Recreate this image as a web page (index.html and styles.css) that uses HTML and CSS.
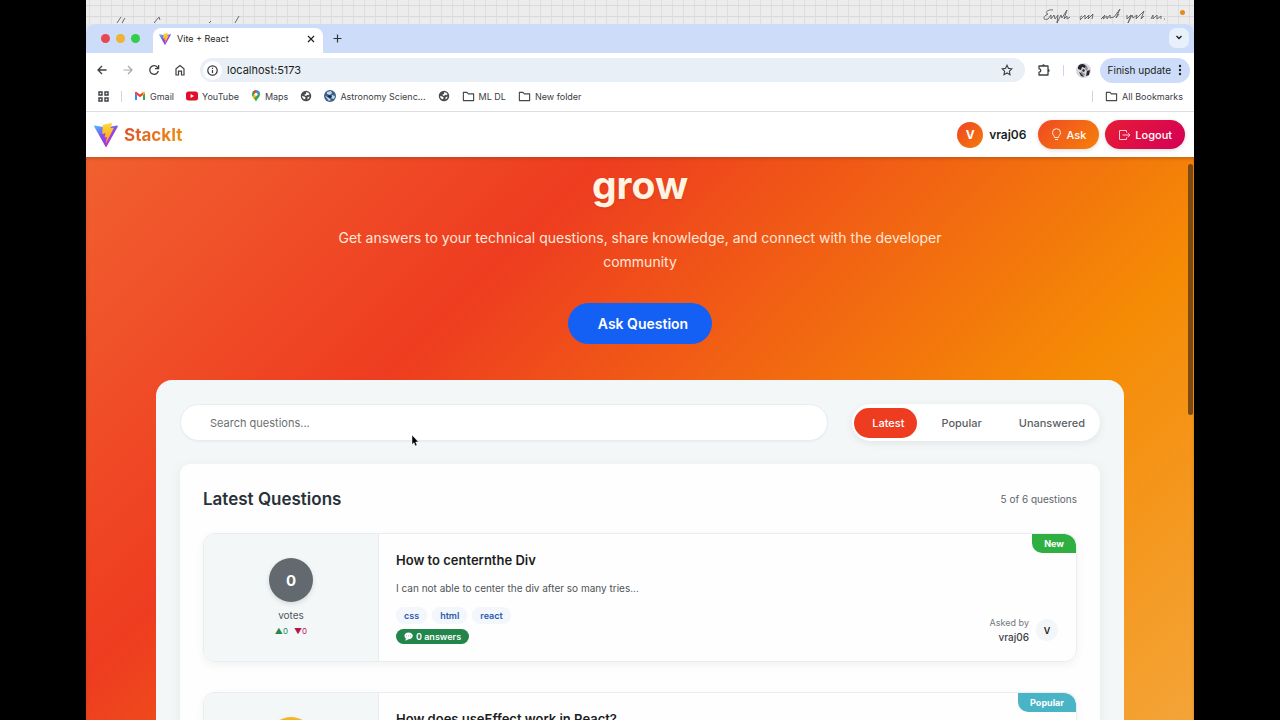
FILE: index.html
```html
<!DOCTYPE html>
<html lang="en">
<head>
  <meta charset="UTF-8" />
  <meta name="viewport" content="width=device-width, initial-scale=1.0"/>
  <title>Vite + React</title>
  <link rel="stylesheet" href="styles.css">
</head>
<body>
  <!-- shared shapes -->
  <svg class="sprite" width="0" height="0" aria-hidden="true">
    <defs>
      <linearGradient id="viteBody" x1="0" y1="0" x2="0.6" y2="1">
        <stop offset="0" stop-color="#41c4ff"/>
        <stop offset="0.5" stop-color="#8a4be8"/>
        <stop offset="1" stop-color="#b030d8"/>
      </linearGradient>
      <linearGradient id="viteBolt" x1="0" y1="0" x2="0" y2="1">
        <stop offset="0" stop-color="#ffd83d"/>
        <stop offset="1" stop-color="#ffa010"/>
      </linearGradient>
    </defs>
    <symbol id="vite" viewBox="0 0 256 257">
      <path fill="url(#viteBody)" d="M255 38 134 254c-2 4-9 4-11 0L1 38c-3-5 1-11 7-10l120 21 119-21c6-1 10 5 8 10z"/>
      <path fill="url(#viteBolt)" d="M185 1 97 18c-2 0-3 2-3 3l-6 92c0 2 2 4 5 4l24-6c3-1 5 2 4 4l-7 36c0 2 2 4 4 4l15-5c3-1 5 2 4 4l-11 56c-1 3 4 5 6 2l78-156c1-2-1-5-4-4l-25 5c-3 0-5-2-4-4l16-47c1-3-1-5-4-5z"/>
    </symbol>
    <symbol id="globe" viewBox="0 0 16 16">
      <circle cx="8" cy="8" r="7" fill="#4a4c50"/>
      <path fill="#fff" d="M8 3c2.200-.2 4 1 4.800 2.800L11 7 9.400 6.200 8.800 7.600H6.600L6 6l2-.8zM2.800 8l3 .8 1.600 1.200-.6 2.400C4.400 12.200 2.800 10.400 2.800 8zM10 9.600l2.800-.8c-.2 1.800-1.400 3.200-2.800 3.800z"/>
    </symbol>
    <symbol id="folder" viewBox="0 0 16 16">
      <path fill="none" stroke="#45474b" stroke-width="1.400" stroke-linejoin="round" d="M1.700 3h4.500l1.600 1.700h6.500v8.300H1.700z"/>
    </symbol>
  </svg>

  <div class="desktop">
    <div class="wallpaper">
      <svg class="scribble scribble-left" width="130" height="8" viewBox="0 0 130 8" aria-hidden="true">
        <path d="M3 8l4-6M8 8l3-5M40 8l5-6 1 3M95 8l2-2M121 8l4-7"/>
      </svg>
      <svg class="scribble" width="124" height="14" viewBox="0 0 124 14" aria-hidden="true">
        <path d="M10 1C5 0 1 4 5 5c-5 2-6 7 0 5l3-4v4l3-4 1 4 3-4-1 8 4-8 1 3 5-8-3 9 3-3v3l3-2M39 7c-4 1 0 3-2 4l5-5v4l4-4-1 4 5-5-1 5M58 10l4-4-2 4 4-3v3l3-4v3l4-1 6-8-4 9 3-4M84 6v4l4-4-3 8 4-8 1 3 4-3-1 4 4-4 4-4-3 8 3-3M108 10l2-4v4l4-4v4l4-3v3M121 10h1"/>
      </svg>
      <span class="rec-dot"></span>
    </div>

    <div class="browser">
      <div class="tab-strip">
        <div class="lights"><span class="light red"></span><span class="light yellow"></span><span class="light green"></span></div>
        <div class="tab">
          <svg width="12" height="12" aria-hidden="true"><use href="#vite"/></svg>
          <span class="tab-title">Vite + React</span>
          <button class="icon-btn" aria-label="Close tab">
            <svg width="8" height="8" viewBox="0 0 8 8"><path d="M1 1l6 6M7 1 1 7" stroke="#202124" stroke-width="1.200"/></svg>
          </button>
        </div>
        <button class="icon-btn" aria-label="New tab">
          <svg width="9" height="9" viewBox="0 0 9 9"><path d="M4.500 0.500v8M0.500 4.500h8" stroke="#303338" stroke-width="1.200"/></svg>
        </button>
        <button class="icon-btn tab-search" aria-label="Search tabs">
          <svg width="8" height="6" viewBox="0 0 8 6"><path d="M1.500 1l2.500 2.500L6.500 1" fill="none" stroke="#202124" stroke-width="1.400"/></svg>
        </button>
      </div>

      <div class="toolbar">
        <div class="nav-buttons">
          <button class="icon-btn" aria-label="Back">
            <svg width="12" height="12" viewBox="0 0 12 12"><path d="M10.500 6H2M6 2 2 6l4 4" fill="none" stroke="#3c4043" stroke-width="1.300"/></svg>
          </button>
          <button class="icon-btn" aria-label="Forward">
            <svg width="12" height="12" viewBox="0 0 12 12"><path d="M1.500 6H10M6 2l4 4-4 4" fill="none" stroke="#a5a7aa" stroke-width="1.200"/></svg>
          </button>
          <button class="icon-btn" aria-label="Reload">
            <svg width="12" height="12" viewBox="0 0 12 12"><path d="M10.300 6.800A4.300 4.300 0 1 1 9.400 3.300L10.500 4.500M10.600 1v3.700H7" fill="none" stroke="#3c4043" stroke-width="1.300"/></svg>
          </button>
          <button class="icon-btn" aria-label="Home">
            <svg width="12" height="12" viewBox="0 0 12 12"><path d="M2 11V4.800L6 1.500l4 3.300V11H7.500V7.200h-3V11z" fill="none" stroke="#3c4043" stroke-width="1.200"/></svg>
          </button>
        </div>
        <div class="address">
          <span class="site-info">
            <svg width="11" height="11" viewBox="0 0 11 11" aria-hidden="true"><circle cx="5.500" cy="5.500" r="4.700" fill="none" stroke="#35373a" stroke-width="1.200"/><path d="M5.500 5v3M5.500 2.800v1.200" stroke="#35373a" stroke-width="1.200"/></svg>
          </span>
          <input class="url" type="text" aria-label="Address" value="localhost:5173">
          <button class="icon-btn" aria-label="Bookmark this tab">
            <svg width="12" height="12" viewBox="0 0 12 12"><path d="M6 1.200l1.500 3.200 3.400.4-2.500 2.400.6 3.500L6 9l-3 1.700.6-3.500L1.100 4.800l3.400-.4z" fill="none" stroke="#3c4043" stroke-width="1.100"/></svg>
          </button>
        </div>
        <div class="toolbar-end">
          <button class="icon-btn" aria-label="Extensions">
            <svg width="14" height="14" viewBox="0 0 14 14"><path d="M2 3h9v9H2V9.200c2.400 0 2.400-3.400 0-3.400z" fill="none" stroke="#3c4043" stroke-width="1.300" stroke-linejoin="round"/><path d="M5 3a1.500 1.700 0 0 1 3 0zM11 6a1.700 1.500 0 0 1 0 3z" fill="#3c4043"/></svg>
          </button>
          <span class="divider"></span>
          <svg width="15" height="15" viewBox="0 0 15 15" aria-hidden="true">
            <circle cx="7.500" cy="7.500" r="7.500" fill="#d8d6dc"/>
            <path fill="#24222b" d="M2 4c1-3 5-4 7-2l2 2-2 1-3-1-1 3-3-1zM7 6l2 1-1 2-2-1zM11 8l3-1-1 5-3 1zM3 9l2 1 3 4-3-1z"/>
            <path fill="#8c8895" d="M9 3l3 2-1 3-2-2zM5 8l2 2 2 1-1 2-3-2z"/>
          </svg>
          <button class="update-btn">Finish update
            <svg width="4" height="12" viewBox="0 0 4 12" aria-hidden="true"><g fill="#202124"><circle cx="2" cy="2" r="1.200"/><circle cx="2" cy="6" r="1.200"/><circle cx="2" cy="10" r="1.200"/></g></svg>
          </button>
        </div>
      </div>

      <nav class="bookmarks" aria-label="Bookmarks">
        <svg width="11" height="11" viewBox="0 0 11 11" aria-hidden="true"><path d="M1 1h3v3H1zM7 1h3v3H7zM1 7h3v3H1zM7 7h3v3H7z" fill="none" stroke="#3c4043" stroke-width="1.400"/></svg>
        <span class="divider"></span>
        <a href="#">
          <svg width="12" height="12" viewBox="0 0 12 12" aria-hidden="true"><path fill="#4285f4" d="M1 3v7h2V5z"/><path fill="#34a853" d="M9 5v5h2V3z"/><path fill="#ea4335" d="M1 2.500C1 1.500 2 1.500 2.600 2L6 4.600 9 2.300V5L6 7.300 1 3.500z"/><path fill="#fbbc04" d="M9 5V2.300c1-.8 2-.4 2 .6v.6z"/></svg>
          Gmail
        </a>
        <a href="#">
          <svg width="12" height="12" viewBox="0 0 12 12" aria-hidden="true"><rect y="1.500" width="12" height="9" rx="2.500" fill="#e0102b"/><path fill="#fff" d="M4.600 4v4L8 6z"/></svg>
          YouTube
        </a>
        <a href="#">
          <svg width="10" height="12" viewBox="0 0 9 12" aria-hidden="true"><path fill="#34a853" d="M4.500 12C4 9 .5 7.500.5 4.300a4 4 0 0 1 8 0C8.500 7.500 5 9 4.500 12z"/><path fill="#4285f4" d="M4.500.3a4 4 0 0 1 3.700 2.500L4 7 3 4z"/><path fill="#ea4335" d="M1.500 1.700A4 4 0 0 1 4.500.3L5 3 3 4.500z"/><path fill="#fbbc04" d="M1 6.500 4 3l2 2-4 4z"/><circle cx="4.500" cy="4.300" r="1.500" fill="#fff"/></svg>
          Maps
        </a>
        <a href="#" aria-label="Site"><svg width="12" height="12" aria-hidden="true"><use href="#globe"/></svg></a>
        <a href="#">
          <svg width="12" height="12" viewBox="0 0 12 12" aria-hidden="true"><circle cx="6" cy="6" r="6" fill="#3d6189"/><path fill="#c5d7e8" d="M3 2l4-1 1 2-2 2-3-1zM1 6l3 1 3 3-2 1zM8 5l3 1-1 3-3-1z"/><path fill="#172c45" d="M5 5l3 1-1 2-4-1z"/></svg>
          Astronomy Scienc...
        </a>
        <a href="#" aria-label="Site"><svg width="12" height="12" aria-hidden="true"><use href="#globe"/></svg></a>
        <a href="#"><svg width="13" height="13" aria-hidden="true"><use href="#folder"/></svg>ML DL</a>
        <a href="#"><svg width="13" height="13" aria-hidden="true"><use href="#folder"/></svg>New folder</a>
        <span class="divider last"></span>
        <a href="#"><svg width="13" height="13" aria-hidden="true"><use href="#folder"/></svg>All Bookmarks</a>
      </nav>

      <div class="page">
        <header class="app-header">
          <a href="#" class="brand">
            <svg width="24" height="24" aria-hidden="true"><use href="#vite"/></svg>
            <span>StackIt</span>
          </a>
          <div class="user-area">
            <span class="avatar">V</span>
            <span class="username">vraj06</span>
            <button class="pill ask">
              <svg width="11" height="13" viewBox="0 0 11 13" aria-hidden="true"><path d="M3.500 9.500c0-2-2-2.500-2-4.800a4 4 0 0 1 8 0c0 2.300-2 2.800-2 4.800zM4 11.500h3" fill="none" stroke="#ffe9d8"/></svg>
              Ask
            </button>
            <button class="pill logout">
              <svg width="13" height="12" viewBox="0 0 13 12" aria-hidden="true"><path d="M8.500 3.500v-2h-7v9h7v-2M4.500 6h7.500M9.700 3.800 12 6 9.700 8.200" fill="none" stroke="#ffc9d6"/></svg>
              Logout
            </button>
          </div>
        </header>

        <main class="hero">
          <h1>grow</h1>
          <p class="subtitle">Get answers to your technical questions, share knowledge, and connect with the developer community</p>
          <button class="cta">Ask Question</button>

          <section class="board">
            <div class="filters">
              <input class="search" type="search" placeholder="Search questions..." aria-label="Search questions">
              <div class="tabs">
                <button class="active">Latest</button>
                <button>Popular</button>
                <button>Unanswered</button>
              </div>
            </div>

            <div class="questions">
              <div class="questions-head">
                <h2>Latest Questions</h2>
                <span>5 of 6 questions</span>
              </div>

              <article class="question">
                <div class="votes">
                  <span class="score">0</span>
                  <span class="votes-label">votes</span>
                  <span class="vote-split"><span class="up">▲0</span><span class="down">▼0</span></span>
                </div>
                <div class="details">
                  <h3>How to centernthe Div</h3>
                  <p>I can not able to center the div after so many tries...</p>
                  <div class="tags"><span>css</span><span>html</span><span>react</span></div>
                  <div class="answers">
                    <svg width="9" height="9" viewBox="0 0 9 9" aria-hidden="true"><path fill="#fff" d="M4.500.5c2.500 0 4.300 1.400 4.300 3.300S7 7.200 4.500 7.200L1.500 8.700l.3-2.300C-1 4 .8.500 4.500.5z"/><path stroke="#8fbfa3" stroke-dasharray="1 1" d="M2 3.800h5"/></svg>
                    0 answers
                  </div>
                </div>
                <div class="author">
                  <div><span class="asked">Asked by</span><span class="name">vraj06</span></div>
                  <span class="mini-avatar">V</span>
                </div>
                <span class="badge new">New</span>
              </article>

              <article class="question">
                <div class="votes">
                  <span class="score gold"></span>
                </div>
                <div class="details">
                  <h3>How does useEffect work in React?</h3>
                </div>
                <span class="badge popular">Popular</span>
              </article>
            </div>
          </section>
        </main>
        <span class="scroll-thumb"></span>
      </div>
    </div>
  </div>

  <svg class="cursor" width="8" height="13" viewBox="0 0 8 13" aria-hidden="true"><path d="M1 1v9.500l2-1.800 1.300 3.300 1.700-.7L4.700 8h2.800z" fill="#000" stroke="#fff" stroke-width="0.500"/></svg>
</body>
</html>
```
FILE: styles.css
```css
* {
  margin: 0;
  padding: 0;
  box-sizing: border-box;
}

:root {
  --strip: #cdddf9;
  --panel: #f4f7f8;
  --line: #e8edef;
  --red: #ee3c20;
  --orange: #f58b05;
}

body {
  font-family: Inter, "Liberation Sans", sans-serif;
  font-size: 12px;
  color: #1c1e21;
  background: #000;
  height: 100vh;
  overflow: hidden;
}

button, input {
  font: inherit;
  color: inherit;
  border: none;
  background: none;
}

button {
  cursor: pointer;
}

a {
  color: inherit;
  text-decoration: none;
}

svg {
  display: block;
  flex-shrink: 0;
}

.sprite {
  position: absolute;
}

.desktop {
  display: flex;
  flex-direction: column;
  height: 100%;
  margin: 0 86px;
  background: #e6e6e6;
}

.wallpaper {
  display: flex;
  justify-content: space-between;
  align-items: flex-end;
  height: 24px;
  flex-shrink: 0;
  padding: 0 9px 1px 28px;
  background-color: #ececec;
  background-image:
    linear-gradient(#dadada 1px, transparent 1px),
    linear-gradient(90deg, #dedede 1px, transparent 1px);
  background-size: 11px 11px;
  background-position: 3px 5px;
}

.scribble {
  fill: none;
  stroke: #66696d;
  margin-left: auto;
}

.scribble-left {
  margin-left: 0;
}

.rec-dot {
  width: 5px;
  height: 5px;
  margin: 0 0 8px 13px;
  border-radius: 50%;
  background: #e58a1f;
}

/* Browser window */
.browser {
  display: flex;
  flex-direction: column;
  flex: 1;
  min-height: 0;
  background: #fff;
  border-radius: 8px 8px 0 0;
  overflow: hidden;
}

.icon-btn {
  display: flex;
  align-items: center;
  justify-content: center;
}

.tab-strip {
  display: flex;
  align-items: center;
  height: 29px;
  flex-shrink: 0;
  padding: 0 5px 1px 15px;
  background: var(--strip);
}

.lights {
  display: flex;
  gap: 6px;
  margin-right: 13px;
}

.light {
  width: 9px;
  height: 9px;
  border-radius: 50%;
}

.light.red { background: #e8474f; }
.light.yellow { background: #efb233; }
.light.green { background: #31cf49; }

.tab {
  display: flex;
  align-items: center;
  align-self: flex-end;
  width: 170px;
  height: 25px;
  padding: 0 8px 4px 6px;
  margin-right: 10px;
  margin-bottom: -1px;
  background: #fff;
  border-radius: 8px 8px 0 0;
}

.tab-title {
  flex: 1;
  margin-left: 6px;
  font-size: 9px;
}

.tab-search {
  width: 20px;
  height: 20px;
  margin-left: auto;
  background: #e8f0fc;
  border-radius: 7px;
}

.toolbar {
  display: flex;
  align-items: center;
  height: 34px;
  flex-shrink: 0;
  padding: 0 4px 0 10px;
}

.nav-buttons {
  display: flex;
  gap: 14px;
  margin-right: 14px;
}

.address {
  display: flex;
  align-items: center;
  flex: 1;
  height: 24px;
  padding: 0 12px 0 3px;
  background: #e9eff7;
  border-radius: 12px;
}

.site-info {
  display: flex;
  align-items: center;
  justify-content: center;
  width: 19px;
  height: 19px;
  background: #fff;
  border-radius: 50%;
}

.url {
  flex: 1;
  margin-left: 5px;
  font-size: 11px;
}

.toolbar-end {
  display: flex;
  align-items: center;
  gap: 12px;
  margin-left: 12px;
}

.divider {
  width: 1px;
  height: 11px;
  background: #c9d6ea;
}

.update-btn {
  display: flex;
  align-items: center;
  gap: 7px;
  height: 25px;
  padding: 0 8px;
  margin-left: -3px;
  font-size: 10px;
  background: var(--strip);
  border-radius: 13px;
}

.bookmarks {
  display: flex;
  align-items: center;
  gap: 12px;
  height: 25px;
  flex-shrink: 0;
  padding: 0 11px 6px 12px;
  border-bottom: 1px solid #dcdee2;
  font-size: 9px;
  color: #3c4043;
}

.bookmarks a {
  display: flex;
  align-items: center;
  gap: 4px;
  white-space: nowrap;
}

.bookmarks .last {
  margin-left: auto;
}

/* App */
.page {
  position: relative;
  display: flex;
  flex-direction: column;
  flex: 1;
  min-height: 0;
}

.app-header {
  display: flex;
  align-items: center;
  justify-content: space-between;
  height: 45px;
  flex-shrink: 0;
  padding: 0 9px 0 8px;
}

.brand {
  display: flex;
  align-items: center;
  gap: 6px;
  font-size: 17px;
  font-weight: 700;
}

.brand span {
  background: linear-gradient(135deg, #d9502e, #ef9412);
  -webkit-background-clip: text;
  background-clip: text;
  color: transparent;
}

.user-area {
  display: flex;
  align-items: center;
}

.avatar {
  display: flex;
  align-items: center;
  justify-content: center;
  width: 26px;
  height: 26px;
  margin-right: 6px;
  border-radius: 50%;
  background: linear-gradient(135deg, #ef4423, #f57c0a);
  color: #fff;
  font-weight: 700;
}

.username {
  margin-right: 12px;
  font-weight: 600;
}

.pill {
  display: flex;
  align-items: center;
  gap: 4px;
  height: 29px;
  padding: 0 13px;
  border-radius: 15px;
  color: #fff;
  font-size: 11px;
  font-weight: 500;
  box-shadow: 0 1px 4px rgba(0, 0, 0, 0.15);
}

.ask {
  margin-right: 6px;
  background: linear-gradient(135deg, #f04a22, #f5810a);
}

.logout {
  background: linear-gradient(135deg, #e61c35, #d40058);
}

.hero {
  display: flex;
  flex-direction: column;
  align-items: center;
  flex: 1;
  min-height: 0;
  padding: 4px 70px 0;
  overflow: hidden;
  text-align: center;
  color: #fff3e2;
  background: linear-gradient(135deg, #f1602f, var(--red) 31%, var(--orange) 72%, #f4a438);
  box-shadow: inset 0 2px 3px rgba(120, 60, 20, 0.3);
}

.hero > * {
  flex-shrink: 0;
}

.hero h1 {
  font-size: 39px;
  line-height: 48px;
  font-weight: 700;
  text-shadow: 0 1px 3px rgba(0, 0, 0, 0.1);
}

.subtitle {
  width: 100%;
  max-width: 640px;
  margin-top: 17px;
  font-size: 14px;
  line-height: 24px;
  color: #ffe8d8;
}

.cta {
  height: 41px;
  margin-top: 29px;
  padding: 0 24px 0 30px;
  border-radius: 21px;
  background: #1560f4;
  color: #fff;
  font-size: 14px;
  font-weight: 600;
}

.board {
  width: 100%;
  margin-top: 36px;
  padding: 24px 24px 0;
  border-radius: 16px 16px 0 0;
  background: var(--panel);
  color: #1c1e21;
  text-align: left;
}

.filters {
  display: flex;
  gap: 24px;
  height: 37px;
  font-size: 11px;
}

.search {
  flex: 1;
  min-width: 0;
  padding: 0 29px;
  background: #fff;
  border: 1px solid var(--line);
  border-radius: 19px;
  box-shadow: 0 1px 1px var(--line);
}

.search::placeholder {
  color: #6c6f73;
}

.tabs {
  display: flex;
  align-items: center;
  gap: 6px;
  padding: 0 2px;
  background: #fff;
  border-radius: 19px;
  box-shadow: 0 2px 8px rgba(0, 0, 0, 0.08);
}

.tabs button {
  height: 30px;
  padding: 0 13px 0 18px;
  border-radius: 15px;
  color: #5b5f63;
  font-weight: 500;
}

.tabs .active {
  background: var(--red);
  color: #fff;
}

.questions {
  margin-top: 23px;
  padding: 24px 23px;
  background: #fefefe;
  border-radius: 10px;
  box-shadow: 0 3px 14px rgba(0, 0, 0, 0.06);
}

.questions-head {
  display: flex;
  align-items: center;
  justify-content: space-between;
  height: 22px;
  margin-bottom: 23px;
  font-size: 10px;
  color: #606468;
}

.questions-head h2 {
  font-size: 17px;
  font-weight: 600;
  color: #283238;
}

.question {
  position: relative;
  display: flex;
  height: 129px;
  margin-bottom: 30px;
  border: 1px solid var(--line);
  border-radius: 12px;
  overflow: hidden;
  box-shadow: 0 3px 10px rgba(0, 0, 0, 0.05);
}

.votes {
  display: flex;
  flex-direction: column;
  align-items: center;
  width: 175px;
  padding-top: 24px;
  background: var(--panel);
  border-right: 1px solid var(--line);
}

.score {
  display: flex;
  align-items: center;
  justify-content: center;
  width: 44px;
  height: 44px;
  flex-shrink: 0;
  border-radius: 50%;
  background: #626a6f;
  color: #fff;
  font-size: 15px;
  font-weight: 700;
  box-shadow: 0 2px 5px rgba(0, 0, 0, 0.12);
}

.score.gold {
  background: #f3b521;
}

.votes-label {
  margin-top: 6px;
  font-size: 10px;
  line-height: 14px;
  color: #53575b;
}

.vote-split {
  display: flex;
  gap: 6px;
  margin-top: 3px;
  font-size: 8px;
  line-height: 12px;
}

.up { color: #1f8a4c; }
.down { color: #b8154a; }

.details {
  flex: 1;
  padding: 17px;
}

.details h3 {
  font-size: 13px;
  line-height: 18px;
  font-weight: 600;
}

.details p {
  margin-top: 11px;
  font-size: 10px;
  line-height: 16px;
  color: #505357;
}

.tags {
  display: flex;
  gap: 5px;
  margin-top: 11px;
}

.tags span {
  padding: 0 8px;
  border-radius: 8px;
  background: #f3f6fa;
  color: #2a5bb0;
  font-size: 9px;
  line-height: 17px;
  font-weight: 600;
}

.answers {
  display: inline-flex;
  align-items: center;
  gap: 3px;
  margin-top: 5px;
  padding: 0 8px;
  border-radius: 8px;
  background: #22854a;
  color: #fff;
  font-size: 9px;
  line-height: 15px;
  font-weight: 600;
}

.author {
  display: flex;
  align-items: center;
  align-self: flex-end;
  gap: 7px;
  padding: 0 18px 17px 0;
  text-align: right;
}

.author .asked,
.author .name {
  display: block;
  line-height: 14px;
}

.asked {
  font-size: 9px;
  color: #74787c;
}

.name {
  font-size: 10px;
  font-weight: 500;
  color: #3f4347;
}

.mini-avatar {
  display: flex;
  align-items: center;
  justify-content: center;
  width: 22px;
  height: 22px;
  border-radius: 50%;
  background: #f3f6f8;
  font-size: 9px;
  font-weight: 600;
}

.badge {
  position: absolute;
  top: 0;
  right: 0;
  padding: 0 12px;
  border-radius: 0 12px 0 10px;
  color: #fff;
  font-size: 9px;
  line-height: 19px;
  font-weight: 700;
}

.badge.new { background: #2fae42; }
.badge.popular { background: #48b4c6; }

.scroll-thumb {
  position: absolute;
  top: 52px;
  right: 1px;
  width: 5px;
  height: 251px;
  border-radius: 3px;
  background: #7b4a10;
}

.cursor {
  position: absolute;
  left: 411px;
  top: 434px;
}
```
